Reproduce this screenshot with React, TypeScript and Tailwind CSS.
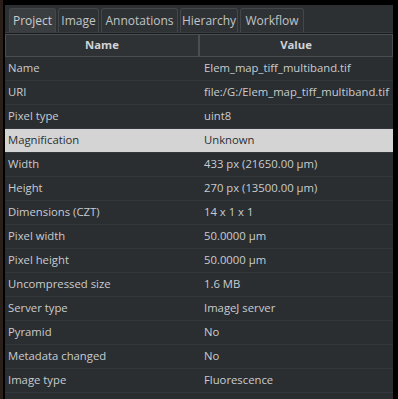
import React from 'react';

const tabs: [string, string][] = [
  ['Project', 'w-[47px]'],
  ['Image', 'w-[41px]'],
  ['Annotations', 'w-[77px]'],
  ['Hierarchy', 'w-[58px]'],
  ['Workflow', 'w-[64px]'],
];

const rows: [string, string][] = [
  ['Name', 'Elem_map_tiff_multiband.tif'],
  ['URI', 'file:/G:/Elem_map_tiff_multiband.tif'],
  ['Pixel type', 'uint8'],
  ['Magnification', 'Unknown'],
  ['Width', '433 px (21650.00 μm)'],
  ['Height', '270 px (13500.00 μm)'],
  ['Dimensions (CZT)', '14 x 1 x 1'],
  ['Pixel width', '50.0000 μm'],
  ['Pixel height', '50.0000 μm'],
  ['Uncompressed size', '1.6 MB'],
  ['Server type', 'ImageJ server'],
  ['Pyramid', 'No'],
  ['Metadata changed', 'No'],
  ['Image type', 'Fluorescence'],
];

export default function App() {
  return (
    <div
      className="w-[398px] h-[399px] overflow-hidden bg-black flex text-[11.3px]"
      style={{ fontFamily: '"Open Sans", "Noto Sans", sans-serif' }}
    >
      {/* left strip */}
      <div className="w-[3px] bg-[#2a2019]" />
      <div className="flex-1 flex flex-col pt-[5px] pl-[2px] pr-[5px]">
        {/* Tabs */}
        <div className="h-[28px] bg-[#2d3033] flex items-end gap-[2px] pl-[4px] border-b border-[#3a3d40]">
          {tabs.map(([t, w], i) => (
            <div
              key={t}
              className={`${w} h-[24px] flex items-center justify-center rounded-t-[3px] border border-b-0 border-[#44474a] text-[12px] ${
                i === 0 ? 'bg-[#3b3e41] text-[#c9ccd0]' : 'bg-[#2f3235] text-[#c0c4c8]'
              }`}
            >
              {t}
            </div>
          ))}
        </div>
        {/* Table */}
        <div className="flex-1 bg-[#2b2e31] flex flex-col">
          <div className="h-[24px] flex bg-[#2a2d30] border-t border-[#1a1b1d]">
            <div className="w-[194px] border border-[#4a4d51] bg-[#2f3235] flex items-center justify-center font-bold text-[#cfd3d7]">
              Name
            </div>
            <div className="flex-1 border border-[#4a4d51] bg-[#2f3235] flex items-center justify-center font-bold text-[#cfd3d7]">
              Value
            </div>
          </div>
          {rows.map(([k, v]) => {
            const sel = k === 'Magnification';
            return (
              <div
                key={k}
                className={`h-[24px] shrink-0 flex items-center border-b border-[#33363a] ${
                  sel ? 'bg-[#d4d4d4] text-[#2b2e31]' : 'text-[#c8ccd0]'
                }`}
              >
                <div className="w-[195px] pl-[3px] whitespace-nowrap overflow-hidden">{k}</div>
                <div className="flex-1 pl-[4px] whitespace-nowrap overflow-hidden">{v}</div>
              </div>
            );
          })}
        </div>
      </div>
    </div>
  );
}
